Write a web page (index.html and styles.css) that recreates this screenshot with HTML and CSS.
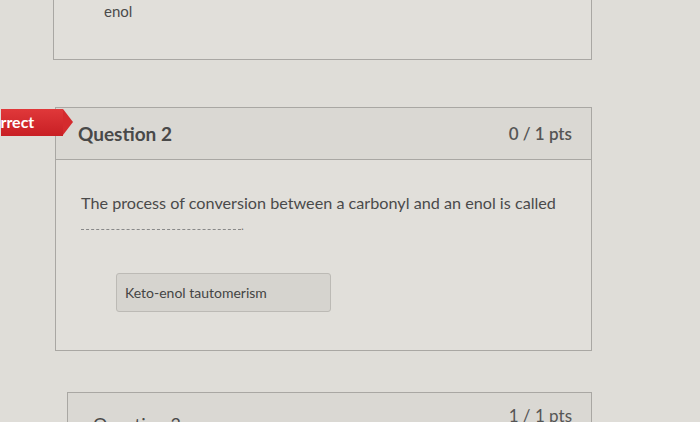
FILE: index.html
```html
<!DOCTYPE html>
<html lang="en">

<head>
    <meta charset="UTF-8">
    <meta name="viewport" content="width=device-width, initial-scale=1.0">
    <title>Quiz Results</title>
    <link rel="stylesheet" href="styles.css">
</head>

<body>

    <div class="card card-prev">
        <div class="prev-answer">enol</div>
    </div>

    <div class="card question">
        <div class="result-badge"><span>Incorrect</span></div>
        <div class="question-header">
            <span class="question-title">Question 2</span>
            <span class="question-points">0 / 1 pts</span>
        </div>
        <div class="question-body">
            <p class="question-text">The process of conversion between a carbonyl and an enol is called</p>
            <p class="blank-line"><span class="blank"></span>.</p>
            <div class="answer-box">Keto-enol tautomerism</div>
        </div>
    </div>

    <div class="card question question-next">
        <div class="question-header">
            <span class="question-title">Question 3</span>
            <span class="question-points">1 / 1 pts</span>
        </div>
    </div>

</body>

</html>
```

FILE: styles.css
```css
body {
    font-family: Lato, "Open Sans", sans-serif;
    background-color: #dfddd8;
    color: #4a4a4a;
    margin: 0;
    padding: 0;
    overflow: hidden;
}

.card {
    border: 1px solid #a9a7a3;
    background-color: #e1dfda;
}

.card-prev {
    margin-left: 53px;
    width: 537px;
    height: 59px;
    border-top: none;
}

.prev-answer {
    padding: 2px 0 0 50px;
    font-size: 15px;
}

.question {
    position: relative;
    margin: 47px 0 0 55px;
    width: 535px;
}

.question-header {
    display: flex;
    justify-content: space-between;
    align-items: center;
    height: 51px;
    padding: 0 19px 0 22px;
    background-color: #dad8d3;
    border-bottom: 1px solid #a9a7a3;
}

.question-title {
    font-size: 19px;
    font-weight: bold;
    color: #494949;
}

.question-points {
    font-size: 17px;
    font-weight: 600;
    color: #555;
}

.question-body {
    height: 190px;
    padding: 0 25px;
}

.question-text {
    margin: 0;
    padding-top: 33px;
    font-size: 16.2px;
}

.blank-line {
    margin: 6px 0 0 0;
    font-size: 12px;
    color: #777;
}

.blank {
    display: inline-block;
    width: 160px;
    border-bottom: 1px dashed #888;
}

.answer-box {
    margin: 40px 0 0 35px;
    width: 205px;
    height: 37px;
    padding-left: 8px;
    display: flex;
    align-items: center;
    font-size: 14px;
    color: #444;
    background-color: #d6d4cf;
    border: 1px solid #bcbab5;
    border-radius: 3px;
}

.question-next {
    margin: 41px 0 0 67px;
    width: 523px;
}

.question-next .question-header {
    align-items: flex-start;
    padding-top: 12px;
    padding-left: 25px;
}

.question-next .question-title {
    font-weight: normal;
    font-size: 18px;
    padding-top: 8px;
}

.question-next .question-points {
    font-weight: normal;
}

.result-badge {
    position: absolute;
    left: -55px;
    top: 1px;
    width: 62px;
    height: 27px;
    background: linear-gradient(#e0383a, #c81f24);
}

.result-badge::after {
    content: "";
    position: absolute;
    right: -10px;
    top: 0;
    border-left: 10px solid #d42b2e;
    border-top: 13.5px solid transparent;
    border-bottom: 13.5px solid transparent;
}

.result-badge span {
    display: block;
    margin-left: -31px;
    line-height: 26px;
    font-size: 16px;
    font-weight: bold;
    color: #fff;
    white-space: nowrap;
}
```
